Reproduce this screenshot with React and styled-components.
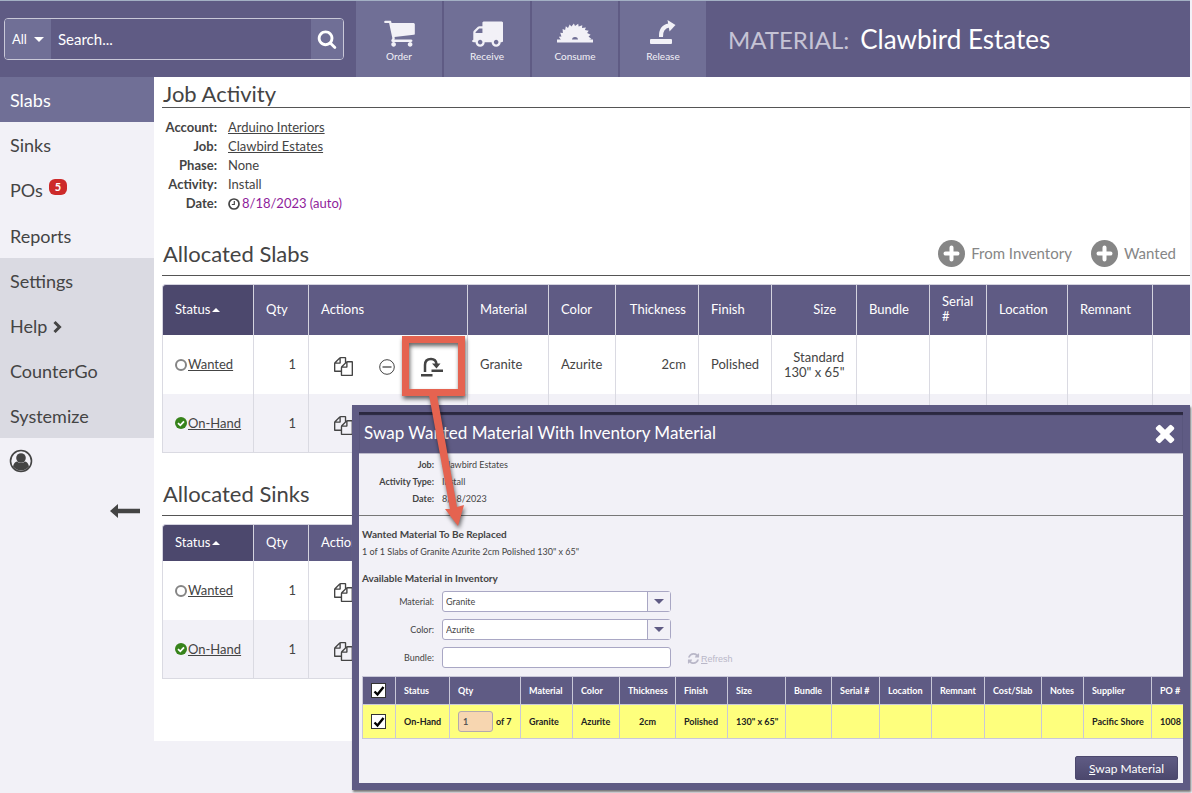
import React from 'react'
import styled, { createGlobalStyle } from 'styled-components'

const slabColumns = [
    { label: 'Status', width: 91, sorted: true },
    { label: 'Qty', width: 55 },
    { label: 'Actions', width: 159 },
    { label: 'Material', width: 81 },
    { label: 'Color', width: 67 },
    { label: 'Thickness', width: 83, right: true },
    { label: 'Finish', width: 73 },
    { label: 'Size', width: 85, right: true, wide: true },
    { label: 'Bundle', width: 73 },
    { label: 'Serial #', width: 57 },
    { label: 'Location', width: 81 },
    { label: 'Remnant', width: 85 },
    { label: '' },
]

const sinkColumns = [
    { label: 'Status', width: 91, sorted: true },
    { label: 'Qty', width: 55 },
    { label: 'Actions', width: 159 },
    { label: '' },
]

const slabs = [
    { status: 'Wanted', qty: 1, swap: true, cells: ['Granite', 'Azurite', '2cm', 'Polished', <>Standard<br />130" x 65"</>, '', '', '', '', ''] },
    { status: 'On-Hand', qty: 1, cells: ['', '', '', '', '', '', '', '', '', ''] },
]

const sinks = [
    { status: 'Wanted', qty: 1, cells: [''] },
    { status: 'On-Hand', qty: 1, cells: [''] },
]

const inventoryColumns = [
    { label: 'Status', width: 54 },
    { label: 'Qty', width: 71 },
    { label: 'Material', width: 52 },
    { label: 'Color', width: 47 },
    { label: 'Thickness', width: 56 },
    { label: 'Finish', width: 52 },
    { label: 'Size', width: 58 },
    { label: 'Bundle', width: 46 },
    { label: 'Serial #', width: 48 },
    { label: 'Location', width: 52 },
    { label: 'Remnant', width: 53 },
    { label: 'Cost/Slab', width: 57 },
    { label: 'Notes', width: 42 },
    { label: 'Supplier', width: 68 },
    { label: 'PO #' },
]

const icons = {
    cart: 'M704 1536q0 52-38 90t-90 38-90-38-38-90 38-90 90-38 90 38 38 90zm896 0q0 52-38 90t-90 38-90-38-38-90 38-90 90-38 90 38 38 90zm128-1088v512q0 24-16.500 42.500t-40.500 21.500l-1044 122q13 60 13 70 0 16-24 64h920q26 0 45 19t19 45-19 45-45 19h-1024q-26 0-45-19t-19-45q0-11 8-31.500t16-36 21.500-40 15.500-29.500l-177-823h-204q-26 0-45-19t-19-45 19-45 45-19h256q16 0 28.500 6.500t19.500 15.500 13 24.500 8 26 5.500 29.500 4.500 26h1201q26 0 45 19t19 45z',
    truck: 'M640 1408q0-52-38-90t-90-38-90 38-38 90 38 90 90 38 90-38 38-90zm-384-512h384v-256h-158q-13 0-22 9l-195 195q-9 9-9 22v30zm1280 512q0-52-38-90t-90-38-90 38-38 90 38 90 90 38 90-38 38-90zm256-1088v1024q0 15-4 26.500t-13.500 18.500-16.500 11.500-23.500 6-22.500 2-25.500 0-22.500-.5q0 106-75 181t-181 75-181-75-75-181h-384q0 106-75 181t-181 75-181-75-75-181h-64q-3 0-22.500.5t-25.500 0-22.500-2-23.500-6-16.500-11.500-13.500-18.500-4-26.500q0-26 19-45t45-19v-320q0-8-.5-35t0-38 2.500-34.500 6.500-37 14-30.500 22.500-30l198-198q19-19 50.500-32t58.500-13h160v-192q0-26 19-45t45-19h1024q26 0 45 19t19 45z',
    search: 'M1216 832q0-185-131.500-316.500t-316.500-131.500-316.500 131.500-131.500 316.500 131.500 316.500 316.500 131.500 316.500-131.500 131.500-316.500zm512 832q0 52-38 90t-90 38q-54 0-90-38l-343-342q-179 124-399 124-143 0-273.500-55.500t-225-150-150-225-55.500-273.500 55.500-273.500 150-225 225-150 273.500-55.500 273.500 55.500 225 150 150 225 55.500 273.500q0 220-124 399l343 343q37 37 37 90z',
    close: 'M1490 1322q0 40-28 68l-136 136q-28 28-68 28t-68-28l-294-294-294 294q-28 28-68 28t-68-28l-136-136q-28-28-28-68t28-68l294-294-294-294q-28-28-28-68t28-68l136-136q28-28 68-28t68 28l294 294 294-294q28-28 68-28t68 28l136 136q28 28 28 68t-28 68l-294 294 294 294q28 28 28 68z',
    refresh: 'M1639 1056q0 5-1 7-64 268-268 434.500t-478 166.500q-146 0-282.500-55t-243.500-157l-129 129q-19 19-45 19t-45-19-19-45v-448q0-26 19-45t45-19h448q26 0 45 19t19 45-19 45l-137 137q71 66 161 102t187 36q134 0 250-65t186-179q11-17 53-117 8-23 30-23h192q13 0 22.500 9.500t9.500 22.500zm25-800v448q0 26-19 45t-45 19h-448q-26 0-45-19t-19-45 19-45l138-138q-148-137-349-137-134 0-250 65t-186 179q-11 17-53 117-8 23-30 23h-199q-13 0-22.500-9.500t-9.500-22.500v-7q65-268 270-434.500t480-166.500q146 0 284 55.500t245 156.500l130-129q19-19 45-19t45 19 19 45z',
    copy: 'M1696 384q40 0 68 28t28 68v1216q0 40-28 68t-68 28h-960q-40 0-68-28t-28-68v-288h-544q-40 0-68-28t-28-68v-672q0-40 20-88t48-76l408-408q28-28 76-48t88-20h416q40 0 68 28t28 68v328q68-40 128-40h416zm-544 213l-299 299h299v-299zm-640-384l-299 299h299v-299zm196 647l316-316v-416h-384v416q0 40-28 68t-68 28h-416v640h512v-256q0-40 20-88t48-76zm956 804v-1152h-384v416q0 40-28 68t-68 28h-416v640h896z',
}

function Icon({ name, size }) {
    return (
        <svg width={size} height={size} viewBox="0 0 1792 1792" fill="currentColor" aria-hidden="true">
            <path d={icons[name]} />
        </svg>
    )
}

function Saw() {
    const teeth = []
    for (let i = 0; i < 12; i++) {
        const a = Math.PI - (i * Math.PI) / 12
        const b = a - Math.PI / 16
        teeth.push(`${18 + 14 * Math.cos(a)},${17 - 14 * Math.sin(a)}`)
        teeth.push(`${18 + 16.500 * Math.cos(b)},${17 - 16.500 * Math.sin(b)}`)
    }
    return (
        <svg width="36" height="20" viewBox="0 0 36 20" fill="currentColor" aria-hidden="true">
            <path fillRule="evenodd" d={`M${teeth.join(' L')} L32,17 H21 a3,3 0 0 0 -6,0 Z`} />
            <rect x="0" y="16.500" width="36" height="3" />
        </svg>
    )
}

function ReleaseIcon() {
    return (
        <svg width="26" height="25" viewBox="0 0 26 25" aria-hidden="true">
            <path d="M11 17 Q10.500 7 19 5.500" fill="none" stroke="currentColor" strokeWidth="4" />
            <path d="M17.500 0 L25.500 5 L19.500 11.500 Z" fill="currentColor" />
            <rect x="0" y="19" width="22" height="5" rx="1" fill="currentColor" />
        </svg>
    )
}

function SwapIcon() {
    return (
        <svg width="22" height="20" viewBox="0 0 22 20" aria-hidden="true">
            <path d="M4 15 V8 Q4 2 10 2 Q15 2 15.500 7" fill="none" stroke="currentColor" strokeWidth="2.500" />
            <path d="M11 6.500 H19.500 L15.500 11.500 Z M10.500 12.500 H22 V15 H10.500 Z M0 17 H11.500 V19.500 H0 Z" fill="currentColor" />
        </svg>
    )
}

function StatusIcon({ done }) {
    if (done) {
        return (
            <svg width="12" height="12" viewBox="0 0 12 12" aria-hidden="true">
                <circle cx="6" cy="6" r="6" fill="#37831b" />
                <path d="M3 6.200 L5.300 8.300 L9 4.300" fill="none" stroke="#fff" strokeWidth="1.800" />
            </svg>
        )
    }
    return (
        <svg width="12" height="12" viewBox="0 0 12 12" aria-hidden="true">
            <circle cx="6" cy="6" r="5" fill="none" stroke="#858585" strokeWidth="2" />
        </svg>
    )
}

function Plus() {
    return (
        <svg width="27" height="27" viewBox="0 0 27 27" aria-hidden="true">
            <circle cx="13.500" cy="13.500" r="13.500" fill="#868686" />
            <path d="M13.500 7.500 V19.500 M7.500 13.500 H19.500" stroke="#fff" strokeWidth="4" strokeLinecap="round" />
        </svg>
    )
}

function AllocationTable({ name, columns, rows, short }) {
    return (
        <Table aria-label={name}>
            <colgroup>
                {columns.map((c, i) => <Col key={i} $width={c.width} />)}
            </colgroup>
            <thead>
                <tr>
                    {columns.map((c, i) => (
                        <Th key={i} $sorted={c.sorted} $right={c.right} $wide={c.wide} $short={short}>
                            {c.label}
                            {c.sorted && <SortArrow />}
                        </Th>
                    ))}
                </tr>
            </thead>
            <tbody>
                {rows.map((row) => (
                    <Row key={row.status}>
                        <Td>
                            <Status>
                                <StatusIcon done={row.status === 'On-Hand'} />
                                <a href="#status">{row.status}</a>
                            </Status>
                        </Td>
                        <Td $right>{row.qty}</Td>
                        <Td>
                            <Actions>
                                <IconButton aria-label="Copy"><Icon name="copy" size={19} /></IconButton>
                                {row.swap && <>
                                    <IconButton aria-label="Remove">
                                        <svg width="16" height="16" viewBox="0 0 16 16" aria-hidden="true">
                                            <circle cx="8" cy="8" r="7.300" fill="none" stroke="currentColor" />
                                            <path d="M3.500 8 H12.500" stroke="currentColor" strokeWidth="1.300" />
                                        </svg>
                                    </IconButton>
                                    <IconButton aria-label="Swap"><SwapIcon /></IconButton>
                                </>}
                            </Actions>
                        </Td>
                        {row.cells.map((cell, i) => (
                            <Td key={i} $right={columns[i + 3].right}>{cell}</Td>
                        ))}
                    </Row>
                ))}
            </tbody>
        </Table>
    )
}

function Tick({ label }) {
    return (
        <TickBox>
            <input type="checkbox" defaultChecked aria-label={label} />
            <svg width="12" height="12" viewBox="0 0 12 12" aria-hidden="true">
                <path d="M1.500 6.500 L4.500 9.500 L10.500 2" fill="none" stroke="#000" strokeWidth="2.400" />
            </svg>
        </TickBox>
    )
}

function Dropdown({ id, value }) {
    return (
        <SelectBox>
            <select id={id} defaultValue={value}>
                <option>{value}</option>
            </select>
            <SelectArrow><Caret $color="#5f5b84" /></SelectArrow>
        </SelectBox>
    )
}

function SwapDialog() {
    return (
        <Dialog role="dialog" aria-label="Swap Wanted Material With Inventory Material">
            <DialogHeader>
                <h2>Swap Wanted Material With Inventory Material</h2>
                <IconButton aria-label="Close"><Icon name="close" size={28} /></IconButton>
            </DialogHeader>
            <DialogFacts>
                <dt>Job:</dt><dd>Clawbird Estates</dd>
                <dt>Activity Type:</dt><dd>Install</dd>
                <dt>Date:</dt><dd>8/18/2023</dd>
            </DialogFacts>
            <DialogBody>
                <h3>Wanted Material To Be Replaced</h3>
                <p>1 of 1 Slabs of Granite Azurite 2cm Polished 130" x 65"</p>
                <h3>Available Material in Inventory</h3>
                <Fields>
                    <label htmlFor="material">Material:</label>
                    <Dropdown id="material" value="Granite" />
                    <label htmlFor="color">Color:</label>
                    <Dropdown id="color" value="Azurite" />
                    <label htmlFor="bundle">Bundle:</label>
                    <BundleInput id="bundle" />
                    <Refresh disabled><Icon name="refresh" size={13} /><span><u>R</u>efresh</span></Refresh>
                </Fields>
                <InventoryTable>
                    <colgroup>
                        <Col $width={33} />
                        {inventoryColumns.map((c) => <Col key={c.label} $width={c.width} />)}
                    </colgroup>
                    <thead>
                        <tr>
                            <th><Tick label="Select all" /></th>
                            {inventoryColumns.map((c) => <th key={c.label}>{c.label}</th>)}
                        </tr>
                    </thead>
                    <tbody>
                        <tr>
                            <td><Tick label="Select slab" /></td>
                            <td>On-Hand</td>
                            <td><Quantity><input defaultValue="1" aria-label="Quantity" />of 7</Quantity></td>
                            <td>Granite</td>
                            <td>Azurite</td>
                            <CenterTd>2cm</CenterTd>
                            <td>Polished</td>
                            <td>130" x 65"</td>
                            <td /><td /><td /><td /><td /><td />
                            <td>Pacific Shore</td>
                            <td>1008</td>
                        </tr>
                    </tbody>
                </InventoryTable>
            </DialogBody>
            <DialogFooter>
                <SwapButton><u>S</u>wap Material</SwapButton>
            </DialogFooter>
        </Dialog>
    )
}

function App() {
    return (
        <Page>
            <GlobalStyle />
            <Header>
                <SearchArea>
                    <SearchBox>
                        <ScopeButton>All <Caret $color="#fff" /></ScopeButton>
                        <input placeholder="Search..." aria-label="Search" />
                        <SearchButton aria-label="Search"><Icon name="search" size={20} /></SearchButton>
                    </SearchBox>
                </SearchArea>
                <Tool><ToolIcon><Icon name="cart" size={33} /></ToolIcon>Order</Tool>
                <Tool><ToolIcon><Icon name="truck" size={32} /></ToolIcon>Receive</Tool>
                <Tool><ToolIcon><Saw /></ToolIcon>Consume</Tool>
                <Tool><ToolIcon><ReleaseIcon /></ToolIcon>Release</Tool>
                <PageTitle><span>MATERIAL:</span>Clawbird Estates</PageTitle>
            </Header>
            <Columns>
                <Sidebar>
                    <NavItem href="#slabs" $active>Slabs</NavItem>
                    <NavItem href="#sinks">Sinks</NavItem>
                    <NavItem href="#pos" $tall>POs<Badge>5</Badge></NavItem>
                    <NavItem href="#reports">Reports</NavItem>
                    <NavGroup>
                        <NavItem href="#settings">Settings</NavItem>
                        <NavItem href="#help">
                            Help
                            <svg width="10" height="14" viewBox="0 0 10 14" aria-hidden="true">
                                <path d="M1.500 3 L6.500 8 L1.500 13" fill="none" stroke="#444" strokeWidth="3" />
                            </svg>
                        </NavItem>
                        <NavItem href="#countergo">CounterGo</NavItem>
                        <NavItem href="#systemize">Systemize</NavItem>
                    </NavGroup>
                    <UserButton aria-label="Account">
                        <svg width="24" height="24" viewBox="0 0 24 24" aria-hidden="true">
                            <circle cx="12" cy="12" r="10.500" fill="none" stroke="#444" strokeWidth="1.600" />
                            <circle cx="12" cy="9" r="4.800" fill="#444" />
                            <path d="M4 17.500 Q5 12.800 8 12.500 Q12 15.500 16 12.500 Q19 12.800 20 17.500 Q16.500 21.500 12 21.500 Q7.500 21.500 4 17.500 Z" fill="#444" />
                        </svg>
                    </UserButton>
                    <CollapseButton aria-label="Collapse menu">
                        <svg width="30" height="14" viewBox="0 0 30 14" aria-hidden="true">
                            <path d="M0 7 L8 0 V4.700 H30 V9.300 H8 V14 Z" fill="#444" />
                        </svg>
                    </CollapseButton>
                </Sidebar>
                <Main>
                    <JobHeading>Job Activity</JobHeading>
                    <JobFacts>
                        <dt>Account:</dt><dd><a href="#account">Arduino Interiors</a></dd>
                        <dt>Job:</dt><dd><a href="#job">Clawbird Estates</a></dd>
                        <dt>Phase:</dt><dd>None</dd>
                        <dt>Activity:</dt><dd>Install</dd>
                        <dt>Date:</dt>
                        <AutoDate>
                            <svg width="12" height="12" viewBox="0 0 12 12" fill="none" stroke="#444" aria-hidden="true">
                                <circle cx="6" cy="6" r="5" strokeWidth="1.700" />
                                <path d="M6.300 3 V6.500 H3.800" strokeWidth="1.200" />
                            </svg>
                            8/18/2023 (auto)
                        </AutoDate>
                    </JobFacts>
                    <SectionBar>
                        <h1>Allocated Slabs</h1>
                        <AddButton><Plus />From Inventory</AddButton>
                        <AddButton><Plus />Wanted</AddButton>
                    </SectionBar>
                    <AllocationTable name="Allocated Slabs" columns={slabColumns} rows={slabs} />
                    <SectionBar>
                        <h1>Allocated Sinks</h1>
                    </SectionBar>
                    <AllocationTable name="Allocated Sinks" columns={sinkColumns} rows={sinks} short />
                </Main>
            </Columns>
            <SwapDialog />
            <Callout width="90" height="210" viewBox="0 0 90 210" aria-hidden="true">
                <rect x="8.500" y="8.500" width="56" height="53" fill="none" stroke="#e56350" strokeWidth="7" />
                <path d="M32 64 H40 L60 176 L67 174 L61 195 L48 178 L53 178 Z" fill="#e56350" />
            </Callout>
        </Page>
    )
}

export default App

const GlobalStyle = createGlobalStyle`
    * {
        box-sizing: border-box;
    }
    body {
        margin: 0;
        background: #f2f1f7;
        color: #444;
        font-family: Lato, sans-serif;
        font-size: 13px;
    }
    h1, h2, h3, p, dl, dd {
        margin: 0;
        font-weight: 400;
    }
    a {
        color: inherit;
    }
    button, input, select {
        font: inherit;
        color: inherit;
        margin: 0;
    }
    svg {
        display: block;
        flex: none;
    }
`
const Page = styled.div`
    position: relative;
    min-height: 100vh;
    padding-right: 2px;
    overflow: hidden;
`
const Header = styled.header`
    display: flex;
    gap: 2px;
    height: 77px;
    background: #5f5b84;
    border-top: 1px solid #a3b0c4;
    color: #fff;
`
const SearchArea = styled.div`
    width: 354px;
    padding: 17px 10px 0 4px;
`
const SearchBox = styled.div`
    display: flex;
    height: 42px;
    border: 1px solid #c9c8d8;
    border-radius: 4px;
    overflow: hidden;

    input {
        flex: 1;
        min-width: 0;
        padding: 0 7px;
        border: 0;
        background: #5f5b84;
        color: #fff;
        font-size: 15px;
    }
    input::placeholder {
        color: #fff;
        opacity: 1;
    }
`
const ScopeButton = styled.button`
    display: flex;
    align-items: center;
    justify-content: space-between;
    width: 46px;
    padding: 0 7px;
    border: 0;
    background: #706f96;
    color: #fff;
`
const SearchButton = styled.button`
    display: flex;
    align-items: center;
    justify-content: center;
    width: 32px;
    padding: 0;
    border: 0;
    background: #706f96;
    color: #fff;
`
const Caret = styled.span`
    width: 0;
    border: 5px solid transparent;
    border-top-color: ${props => props.$color};
    border-bottom: 0;
`
const Tool = styled.button`
    display: flex;
    flex-direction: column;
    align-items: center;
    width: 86px;
    padding: 15px 0 0;
    border: 0;
    background: #706f96;
    color: #f2f1f7;
    font-size: 10px;
    line-height: 14px;
`
const ToolIcon = styled.span`
    display: flex;
    align-items: center;
    height: 33px;
`
const PageTitle = styled.div`
    display: flex;
    align-items: baseline;
    gap: 11px;
    padding-left: 20px;
    font-size: 26px;
    line-height: 76px;
    white-space: nowrap;

    span {
        color: #c5c3d5;
        font-size: 24px;
    }
`
const Columns = styled.div`
    display: flex;
    align-items: flex-start;
`
const Sidebar = styled.nav`
    display: flex;
    flex-direction: column;
    flex: none;
    width: 154px;
`
const NavItem = styled.a`
    display: flex;
    align-items: center;
    gap: 6px;
    height: ${props => props.$tall ? '46px' : '45px'};
    padding-left: 10px;
    font-size: 18px;
    text-decoration: none;
    ${props => props.$active && `
        background: #706f96;
        color: #fff;
    `}
`
const Badge = styled.span`
    align-self: flex-start;
    margin-top: 12px;
    width: 18px;
    border-radius: 6px;
    background: #cd2a2a;
    color: #fff;
    font-size: 11px;
    font-weight: 700;
    line-height: 16px;
    text-align: center;
`
const NavGroup = styled.div`
    background: #dadae2;
`
const IconButton = styled.button`
    display: flex;
    padding: 0;
    border: 0;
    background: none;
`
const UserButton = styled(IconButton)`
    padding: 11px 9px;
`
const CollapseButton = styled(IconButton)`
    align-self: flex-end;
    padding: 20px 14px;
`
const Main = styled.main`
    flex: 1;
    min-width: 0;
    padding: 0 0 62px 8px;
    background: #fff;
`
const JobHeading = styled.h1`
    height: 31px;
    padding-left: 1px;
    border-bottom: 1px solid #555;
    font-size: 22px;
    line-height: 34px;
`
const JobFacts = styled.dl`
    display: grid;
    grid-template-columns: 55px 1fr;
    column-gap: 11px;
    padding: 10px 0 21px;
    line-height: 19px;

    dt {
        font-weight: 700;
        text-align: right;
    }
`
const AutoDate = styled.dd`
    display: flex;
    align-items: center;
    gap: 2px;
    color: #8f1c9b;
`
const SectionBar = styled.div`
    display: flex;
    align-items: center;
    gap: 19px;
    height: 42px;
    margin: 0 0 8px;
    padding: 0 14px 3px 1px;
    border-bottom: 1px solid #555;

    h1 {
        flex: 1;
        font-size: 22px;
    }
    table + & {
        margin-top: 21px;
    }
`
const AddButton = styled(IconButton)`
    align-items: center;
    gap: 6px;
    color: #868686;
    font-size: 15px;
`
const Table = styled.table`
    width: 100%;
    table-layout: fixed;
    border-collapse: separate;
    border-spacing: 0;
    line-height: 15px;
`
const Col = styled.col`
    width: ${props => props.$width ? props.$width + 'px' : 'auto'};
`
const Th = styled.th`
    height: ${props => props.$short ? '37px' : '51px'};
    padding: 0 ${props => props.$wide ? '20px' : '12px'} 2px 12px;
    border: solid #d4d3df;
    border-width: 1px 0 0 1px;
    background: ${props => props.$sorted ? '#4c486d' : '#5f5b84'};
    color: #fff;
    font-weight: 400;
    text-align: ${props => props.$right ? 'right' : 'left'};
    &:first-child {
        border-top-left-radius: 4px;
    }
`
const SortArrow = styled.span`
    display: inline-block;
    margin-left: 2px;
    vertical-align: 2px;
    border: 4px solid transparent;
    border-bottom-color: #fff;
    border-top: 0;
`
const Row = styled.tr`
    &:nth-child(even) {
        background: #f2f1f7;
    }
    &:last-child td {
        border-bottom: 1px solid #dadae2;
    }
`
const Td = styled.td`
    height: 59px;
    padding: 0 12px;
    border-left: 1px solid #dadae2;
    text-align: ${props => props.$right ? 'right' : 'left'};
    white-space: nowrap;
`
const Status = styled.span`
    display: flex;
    align-items: center;
    gap: 1px;
`
const Actions = styled.span`
    display: flex;
    align-items: center;
    gap: 26px;
    padding: 4px 0 0 13px;
`
const Dialog = styled.section`
    position: absolute;
    top: 405px;
    left: 352px;
    right: 2px;
    border: 7px solid #5f5b84;
    background: #f2f1f7;
    box-shadow: 1px 2px 2px #777;
    font-size: 9px;
`
const DialogHeader = styled.div`
    display: flex;
    align-items: center;
    justify-content: space-between;
    height: 42px;
    padding: 0 4px 0 5px;
    background: #5f5b84;
    border-bottom: 1px solid #bcbacb;
    box-shadow: inset 0 3px 1px #2b2840;
    color: #fff;

    h2 {
        font-size: 17px;
    }
`
const DialogFacts = styled.dl`
    display: grid;
    grid-template-columns: 75px 1fr;
    column-gap: 8px;
    padding: 2px 0 8px;
    border-bottom: 1px solid #777;
    line-height: 17px;

    dt {
        font-weight: 700;
        text-align: right;
    }
`
const DialogBody = styled.div`
    padding-left: 3px;
    overflow: hidden;

    h3 {
        padding-top: 10px;
        font-size: 10px;
        font-weight: 700;
        line-height: 17px;
    }
    p {
        line-height: 17px;
    }
`
const Fields = styled.div`
    display: grid;
    grid-template-columns: 72px 229px 1fr;
    align-items: center;
    gap: 7px 8px;
    padding: 4px 0 8px;

    label {
        grid-column: 1;
        text-align: right;
    }
`
const SelectBox = styled.div`
    display: flex;
    height: 21px;
    border: 1px solid #a9a7c4;
    border-radius: 3px;
    background: #fff;

    select {
        flex: 1;
        padding: 0 3px;
        border: 0;
        background: none;
        appearance: none;
    }
`
const SelectArrow = styled.span`
    display: flex;
    align-items: center;
    justify-content: center;
    width: 23px;
    border-left: 1px solid #a9a7c4;
    background: #f2f1f7;
    pointer-events: none;
`
const BundleInput = styled.input`
    height: 21px;
    padding: 0 3px;
    border: 1px solid #a9a7c4;
    border-radius: 3px;
    background: #fff;
`
const Refresh = styled.button`
    display: flex;
    align-items: center;
    gap: 1px;
    padding: 2px 0 0 8px;
    border: 0;
    background: none;
    color: #b9b7c8;
    font-family: 'Liberation Sans', sans-serif;
    font-size: 9px;
`
const InventoryTable = styled.table`
    width: 100%;
    table-layout: fixed;
    border-collapse: separate;
    border-spacing: 0;
    white-space: nowrap;

    th, td {
        padding: 0 0 0 8px;
        border: solid #c9c8d8;
        border-width: 1px 0 0 1px;
        text-align: left;
        font-weight: 700;
    }
    th {
        height: 28px;
        background: #5f5b84;
        color: #fff;
    }
    td {
        height: 35px;
        border-bottom-width: 1px;
        background: #feff7d;
        color: #222;
    }
`
const CenterTd = styled.td`
    &&& {
        padding: 0;
        text-align: center;
    }
`
const TickBox = styled.span`
    display: grid;
    width: 15px;
    height: 15px;

    input {
        grid-area: 1 / 1;
        width: 15px;
        height: 15px;
        border: 1px solid #333;
        background: #fff;
        appearance: none;
    }
    svg {
        grid-area: 1 / 1;
        place-self: center;
        pointer-events: none;
    }
`
const Quantity = styled.span`
    display: flex;
    align-items: center;
    gap: 3px;

    input {
        width: 35px;
        height: 21px;
        padding: 0 4px;
        border: 1px solid #b3a9ad;
        border-radius: 3px;
        background: #f7d6b0;
        color: #555;
    }
`
const DialogFooter = styled.div`
    display: flex;
    justify-content: flex-end;
    padding: 17px 5px 3px;
`
const SwapButton = styled.button`
    width: 103px;
    height: 24px;
    padding: 0;
    border: 1px solid #4c486d;
    border-radius: 2px;
    background: linear-gradient(#5f5b84, #4c486d);
    color: #fff;
    font-size: 12px;
`
const Callout = styled.svg`
    position: absolute;
    top: 331px;
    left: 397px;
    filter: drop-shadow(1px 3px 2px rgba(0, 0, 0, 0.6));
    pointer-events: none;
`
